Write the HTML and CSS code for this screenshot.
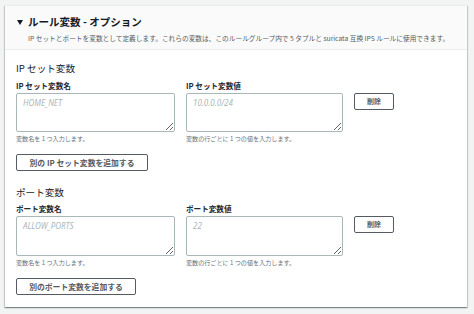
FILE: index.html
```html
<!DOCTYPE html>
<html lang="ja">
<head>
<meta charset="utf-8">
<link rel="stylesheet" href="styles.css">
</head>
<body>
<div class="card">
  <div class="card-header">
    <div class="title-row">
      <svg class="caret" width="6" height="5" viewBox="0 0 6 5"><polygon points="0,0 6,0 3,5" fill="#16191f"/></svg>
      <span class="title">ルール変数 - オプション</span>
    </div>
    <div class="desc">IP セットとポートを変数として定義します。これらの変数は、このルールグループ内で 5 タプルと suricata 互換 IPS ルールに使用できます。</div>
  </div>
  <div class="card-body">
    <div class="section">
      <h3 class="section-title">IP セット変数</h3>
      <div class="row">
        <div class="field">
          <label class="label">IP セット変数名</label>
          <textarea class="input" placeholder="HOME_NET"></textarea>
          <div class="help">変数名を 1 つ入力します。</div>
        </div>
        <div class="field">
          <label class="label">IP セット変数値</label>
          <textarea class="input" placeholder="10.0.0.0/24"></textarea>
          <div class="help">変数の行ごとに 1 つの値を入力します。</div>
        </div>
        <div class="actions"><button class="btn btn-small">削除</button></div>
      </div>
      <button class="btn btn-add">別の IP セット変数を追加する</button>
    </div>
    <div class="section second">
      <h3 class="section-title">ポート変数</h3>
      <div class="row">
        <div class="field">
          <label class="label">ポート変数名</label>
          <textarea class="input" placeholder="ALLOW_PORTS"></textarea>
          <div class="help">変数名を 1 つ入力します。</div>
        </div>
        <div class="field">
          <label class="label">ポート変数値</label>
          <textarea class="input" placeholder="22"></textarea>
          <div class="help">変数の行ごとに 1 つの値を入力します。</div>
        </div>
        <div class="actions"><button class="btn btn-small">削除</button></div>
      </div>
      <button class="btn btn-add">別のポート変数を追加する</button>
    </div>
  </div>
</div>
</body>
</html>
```
FILE: styles.css
```css
* { box-sizing: border-box; }
html, body { margin: 0; }
body {
  background: #f2f3f3;
  padding: 5px 7px 7px 5px;
  font-family: "Noto Sans", "Noto Sans CJK JP", sans-serif;
  color: #16191f;
}
.card {
  background: #fff;
  border-top: 1px solid #eaeded;
  box-shadow: 0 1px 1px 0 rgba(0,28,36,.3), 1px 1px 1px 0 rgba(0,28,36,.15), -1px 1px 1px 0 rgba(0,28,36,.15);
  height: 302px;
}
.card-header {
  background: #fafafa;
  border-bottom: 1px solid #eaeded;
  padding: 8px 11px 5px 12px;
}
.title-row {
  display: flex;
  align-items: center;
  height: 16px;
}
.caret { margin-right: 5px; margin-top: 1px; }
.title {
  font-family: "Noto Sans CJK JP", sans-serif;
  font-size: 10.5px;
  font-weight: 700;
  line-height: 16px;
}
.desc {
  font-family: "Noto Sans CJK JP", sans-serif;
  font-size: 6.7px;
  line-height: 11px;
  color: #545b64;
  margin-top: 3px;
  padding-left: 11px;
  white-space: nowrap;
}
.card-body { padding: 11px 11px 0 11px; }
.section-title {
  margin: 0;
  font-family: "Noto Sans CJK JP", sans-serif;
  font-size: 9.6px;
  font-weight: 400;
  line-height: 14px;
}
.second { margin-top: 14px; }
.row {
  display: grid;
  grid-template-columns: 159px 157px auto;
  column-gap: 11px;
  margin-top: 5px;
}
.second .row { margin-top: 4px; }
.field { display: flex; flex-direction: column; }
.label {
  font-family: "Noto Sans CJK JP", sans-serif;
  font-size: 7.6px;
  font-weight: 700;
  line-height: 11px;
  color: #232830;
  margin-bottom: 2px;
}
.input {
  display: block;
  width: 100%;
  height: 39px;
  border: 1px solid #aab7b8;
  border-radius: 2px;
  padding: 3px 6px;
  margin: 0;
  font-family: "Noto Sans", "Noto Sans CJK JP", sans-serif;
  font-size: 8px;
  color: #16191f;
  background: #fff;
}
.second .input { height: 40px; }
.input::placeholder { color: #aab7b8; font-style: italic; }
.help {
  font-family: "Noto Sans CJK JP", sans-serif;
  font-size: 6.1px;
  line-height: 10px;
  color: #687078;
  margin-top: 2px;
}
.actions { padding-top: 13px; }
.btn {
  display: block;
  background: #fff;
  border: 1px solid #545b64;
  border-radius: 2px;
  color: #545b64;
  font-family: "Noto Sans CJK JP", sans-serif;
  font-weight: 700;
  font-size: 7.8px;
  line-height: 15px;
  height: 17px;
  padding: 0;
  margin: 0;
}
.btn-small { width: 40px; font-size: 7px; }
.btn-add { margin-top: 10px; padding: 0 10px; }
.section:first-child .btn-add { width: 132px; }
.second .btn-add { width: 120px; }
```
